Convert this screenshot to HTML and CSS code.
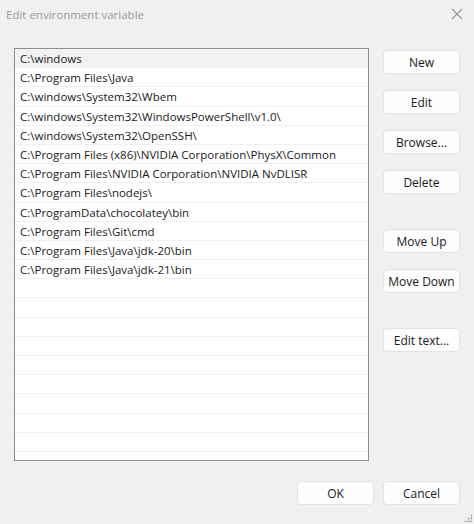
FILE: index.html
```html
<!DOCTYPE html>
<html lang="en">
<head>
    <meta charset="UTF-8">
    <meta name="viewport" content="width=device-width, initial-scale=1.0">
    <link rel="stylesheet" href="styles.css">
</head>
<body>
    <div class="dialog">
        <!-- Title bar -->
        <div class="titlebar">
            <span class="title">Edit environment variable</span>
            <svg class="close" width="12" height="12" viewBox="0 0 12 12">
                <path d="M1 1 L11 11 M11 1 L1 11" stroke="#9a9a9a" stroke-width="1.2" fill="none"/>
            </svg>
        </div>

        <div class="content">
            <!-- Path list -->
            <div class="list">
                <div class="row selected">C:\windows</div>
                <div class="row">C:\Program Files\Java</div>
                <div class="row">C:\windows\System32\Wbem</div>
                <div class="row">C:\windows\System32\WindowsPowerShell\v1.0\</div>
                <div class="row">C:\windows\System32\OpenSSH\</div>
                <div class="row">C:\Program Files (x86)\NVIDIA Corporation\PhysX\Common</div>
                <div class="row">C:\Program Files\NVIDIA Corporation\NVIDIA NvDLISR</div>
                <div class="row">C:\Program Files\nodejs\</div>
                <div class="row">C:\ProgramData\chocolatey\bin</div>
                <div class="row">C:\Program Files\Git\cmd</div>
                <div class="row">C:\Program Files\Java\jdk-20\bin</div>
                <div class="row">C:\Program Files\Java\jdk-21\bin</div>
                <div class="row"></div>
                <div class="row"></div>
                <div class="row"></div>
                <div class="row"></div>
                <div class="row"></div>
                <div class="row"></div>
                <div class="row"></div>
                <div class="row"></div>
                <div class="row"></div>
            </div>

            <!-- Side buttons -->
            <div class="side">
                <div class="group">
                    <button class="button">New</button>
                    <button class="button">Edit</button>
                    <button class="button">Browse...</button>
                    <button class="button">Delete</button>
                </div>
                <div class="group move">
                    <button class="button">Move Up</button>
                    <button class="button">Move Down</button>
                </div>
                <button class="button edit-text">Edit text...</button>
            </div>
        </div>

        <div class="footer">
            <button class="button">OK</button>
            <button class="button">Cancel</button>
        </div>
        <div class="grip"></div>
    </div>
</body>
</html>
```

FILE: styles.css
```css
body {
    margin: 0;
    background: #f0f0f0;
    font-family: "Open Sans", "Noto Sans", sans-serif;
    font-size: 11.5px;
    color: #1a1a1a;
}
.dialog {
    position: relative;
    width: 474px;
    height: 524px;
}
.titlebar {
    height: 28px;
    display: flex;
    align-items: center;
    justify-content: space-between;
    padding: 0 11px 0 6px;
}
.title {
    color: #9a9a9a;
    font-size: 11.5px;
}
.content {
    display: flex;
    padding: 20px 0 0 14px;
}
.list {
    width: 353px;
    height: 411px;
    border: 1px solid #8c8c8c;
    background: #fff;
    overflow: hidden;
}
.row {
    height: 18.2px;
    line-height: 20px;
    padding-left: 5px;
    border-bottom: 1px solid #f0f0f0;
    white-space: nowrap;
}
.selected {
    background: #f2f2f2;
}
.side {
    display: flex;
    flex-direction: column;
    margin-left: 14px;
    padding-top: 2px;
}
.group {
    display: flex;
    flex-direction: column;
    gap: 16px;
}
.move {
    margin-top: 35px;
}
.edit-text {
    margin-top: 35px;
}
.button {
    width: 77px;
    height: 24px;
    padding: 0;
    background: #fdfdfd;
    border: 1px solid #e2e2e2;
    border-radius: 4px;
    font-family: inherit;
    font-size: 12px;
    color: #1a1a1a;
}
.footer {
    display: flex;
    justify-content: flex-end;
    gap: 9px;
    padding: 20px 14px 0 0;
}
.grip {
    position: absolute;
    right: 2px;
    bottom: 2px;
    width: 8px;
    height: 8px;
    background: radial-gradient(circle, #b8b8b8 1px, transparent 1.2px) 0 0 / 3px 3px;
    clip-path: polygon(100% 0, 100% 100%, 0 100%);
}
```
